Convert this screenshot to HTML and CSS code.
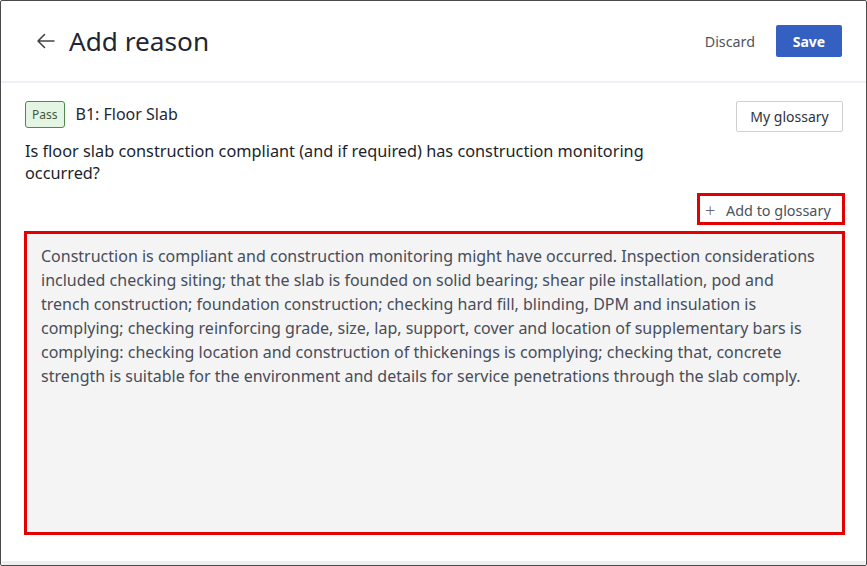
FILE: index.html
```html
<!DOCTYPE html>
<html lang="en">
<head>
  <meta charset="UTF-8" />
  <meta name="viewport" content="width=device-width, initial-scale=1.0"/>
  <title>Add reason</title>
  <link rel="stylesheet" href="styles.css">
</head>
<body>

  <div class="dialog">
    <header class="dialog-header">
      <button class="back" aria-label="Back">
        <svg width="20" height="16" viewBox="0 0 20 16">
          <path d="M18 8H2M8.5 1.5L2 8l6.5 6.5" fill="none" stroke="#444" stroke-width="1.6" stroke-linecap="round" stroke-linejoin="round"/>
        </svg>
      </button>
      <h1>Add reason</h1>
      <div class="actions">
        <button class="link-btn">Discard</button>
        <button class="primary-btn">Save</button>
      </div>
    </header>

    <main class="dialog-body">
      <div class="item-row">
        <span class="tag">Pass</span>
        <span class="item-title">B1: Floor Slab</span>
        <button class="outline-btn">My glossary</button>
      </div>

      <p class="question">Is floor slab construction compliant (and if required) has construction monitoring occurred?</p>

      <div class="glossary-row">
        <button class="add-btn"><span class="plus">+</span> Add to glossary</button>
      </div>

      <textarea class="reason" id="reason">Construction is compliant and construction monitoring might have occurred. Inspection considerations included checking siting; that the slab is founded on solid bearing; shear pile installation, pod and trench construction; foundation construction; checking hard fill, blinding, DPM and insulation is complying; checking reinforcing grade, size, lap, support, cover and location of supplementary bars is complying: checking location and construction of thickenings is complying; checking that, concrete strength is suitable for the environment and details for service penetrations through the slab comply.</textarea>
    </main>

    <div class="dialog-foot"></div>
  </div>

</body>
</html>
```

FILE: styles.css
```css
* {
  box-sizing: border-box;
}

body {
  margin: 0;
  font-family: "Noto Sans", "Open Sans", sans-serif;
  color: #1f2633;
  background: #fff;
}

button {
  font-family: inherit;
  cursor: pointer;
}

.dialog {
  height: 566px;
  border: 1px solid #4a4a4a;
  border-radius: 2px;
  display: flex;
  flex-direction: column;
}

.dialog-header {
  height: 82px;
  flex-shrink: 0;
  display: flex;
  align-items: center;
  padding: 0 24px 0 35px;
  border-bottom: 2px solid #edf1f5;
}

.back {
  border: none;
  background: none;
  padding: 0;
  margin-right: 13px;
  display: flex;
}

h1 {
  margin: 0;
  font-size: 26.2px;
  font-weight: 400;
  color: #1f2633;
}

.actions {
  margin-left: auto;
  display: flex;
  align-items: center;
  gap: 21px;
}

.link-btn {
  border: none;
  background: none;
  padding: 0;
  font-size: 14.3px;
  color: #4f5560;
}

.primary-btn {
  width: 66px;
  height: 32px;
  border: none;
  border-radius: 2px;
  background: #3461c1;
  color: #fff;
  font-size: 14px;
  font-weight: 700;
}

.dialog-body {
  flex: 1;
  padding: 18px 21px 0 23px;
  display: flex;
  flex-direction: column;
}

.item-row {
  display: flex;
  align-items: flex-start;
}

.tag {
  margin-left: 1px;
  height: 27px;
  padding: 0 6px;
  display: inline-flex;
  align-items: center;
  font-size: 12px;
  color: #3d5a3d;
  background: #e5f5e3;
  border: 1px solid #4f8a4c;
  border-radius: 3px;
}

.item-title {
  margin-left: 11px;
  font-size: 16px;
  line-height: 26px;
  color: #1f2633;
}

.outline-btn {
  margin-left: auto;
  height: 31px;
  width: 107px;
  margin-right: 2px;
  border: 1px solid #d0d0d0;
  border-radius: 2px;
  background: #fff;
  font-size: 14px;
  color: #2d3440;
}

.question {
  margin: 8px 0 0 1px;
  max-width: 640px;
  font-size: 16.3px;
  line-height: 22px;
  color: #1a1f2b;
}

.glossary-row {
  display: flex;
  justify-content: flex-end;
  margin-top: 9px;
}

.add-btn {
  height: 32px;
  width: 148px;
  border: 3px solid #e30000;
  background: #fff;
  padding: 0 0 0 5px;
  font-size: 14.4px;
  color: #4a5260;
  text-align: left;
}

.plus {
  font-size: 18px;
  font-weight: 300;
  color: #666;
  margin-right: 7px;
  position: relative;
  top: 1px;
}

.reason {
  margin-top: 6px;
  height: 304px;
  width: 100%;
  resize: none;
  border: 3px solid #e30000;
  background: #f4f4f4;
  padding: 10px 23px 10px 14px;
  font-family: "Noto Sans", "Open Sans", sans-serif;
  font-size: 16px;
  line-height: 24px;
  color: #474d5a;
  outline: none;
}

.dialog-foot {
  height: 4px;
  margin: 0 1px 0;
  background: #efefef;
  border-radius: 0 0 3px 3px;
}
```
